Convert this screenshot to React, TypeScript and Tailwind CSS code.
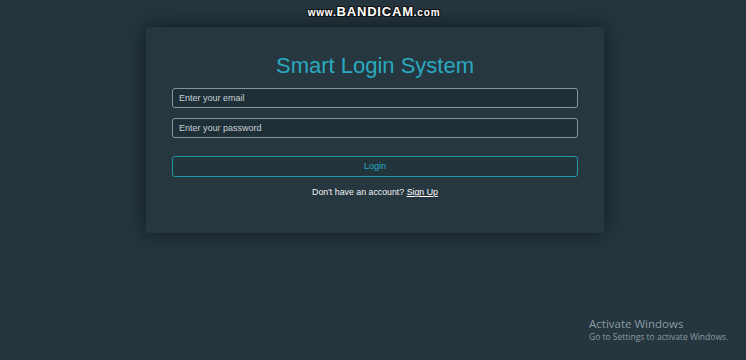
import React from "react";

export default function App() {
  return (
    <div
      className="relative w-[746px] h-[360px] overflow-hidden bg-[#25363f]"
      style={{ fontFamily: '"Liberation Sans", Arial, sans-serif' }}
    >
      {/* watermark */}
      <div className="absolute left-0 right-0 top-[2px] flex justify-center pl-[2px]">
        <div
          className="flex items-baseline text-white font-bold tracking-[0.8px]"
          style={{
            textShadow:
              "1px 1px 0 #111, -1px -1px 0 #111, 1px -1px 0 #111, -1px 1px 0 #111",
          }}
        >
          <span className="text-[10px]">www.</span>
          <span className="text-[13px]">BANDICAM</span>
          <span className="text-[10px]">.com</span>
        </div>
      </div>

      <div className="flex justify-center pt-[27px] pl-[4px]">
        <div className="w-[458px] h-[206px] bg-[#26373f] rounded-[3px] shadow-[0_0_22px_rgba(0,0,0,0.55)] px-[26px] pt-[24px] flex flex-col">
          <h1 className="text-center text-[22px] leading-[30px] text-[#2aa9c1]">
            Smart Login System
          </h1>
          <div className="mt-[7px] flex flex-col gap-[10px]">
            <input
              className="h-[20px] w-full rounded-[3px] border border-[#8296a0] bg-[#1f2f37] px-[6px] text-[9px] text-white placeholder:text-[#c8d0d4] outline-none"
              placeholder="Enter your email"
            />
            <input
              className="h-[20px] w-full rounded-[3px] border border-[#8296a0] bg-[#1f2f37] px-[6px] text-[9px] text-white placeholder:text-[#c8d0d4] outline-none"
              placeholder="Enter your password"
              type="password"
            />
          </div>
          <button className="mt-[18px] h-[21px] w-full rounded-[3px] border border-[#2596ab] bg-[#22353d] pt-[1px] text-[9px] text-[#2aa9c1]">
            Login
          </button>
          <p className="mt-[9px] text-center text-[8.8px] text-[#f0f2f3]">
            Don't have an account?{" "}
            <a className="underline text-white" href="#">
              Sign Up
            </a>
          </p>
        </div>
      </div>

      <div
        className="absolute left-[589px] top-[317px] text-[#8c9ba1]"
        style={{ fontFamily: '"Open Sans", "Noto Sans", sans-serif' }}
      >
        <div className="text-[11.5px] leading-[14px]">Activate Windows</div>
        <div className="text-[8.5px] leading-[12px]">
          Go to Settings to activate Windows.
        </div>
      </div>
    </div>
  );
}
